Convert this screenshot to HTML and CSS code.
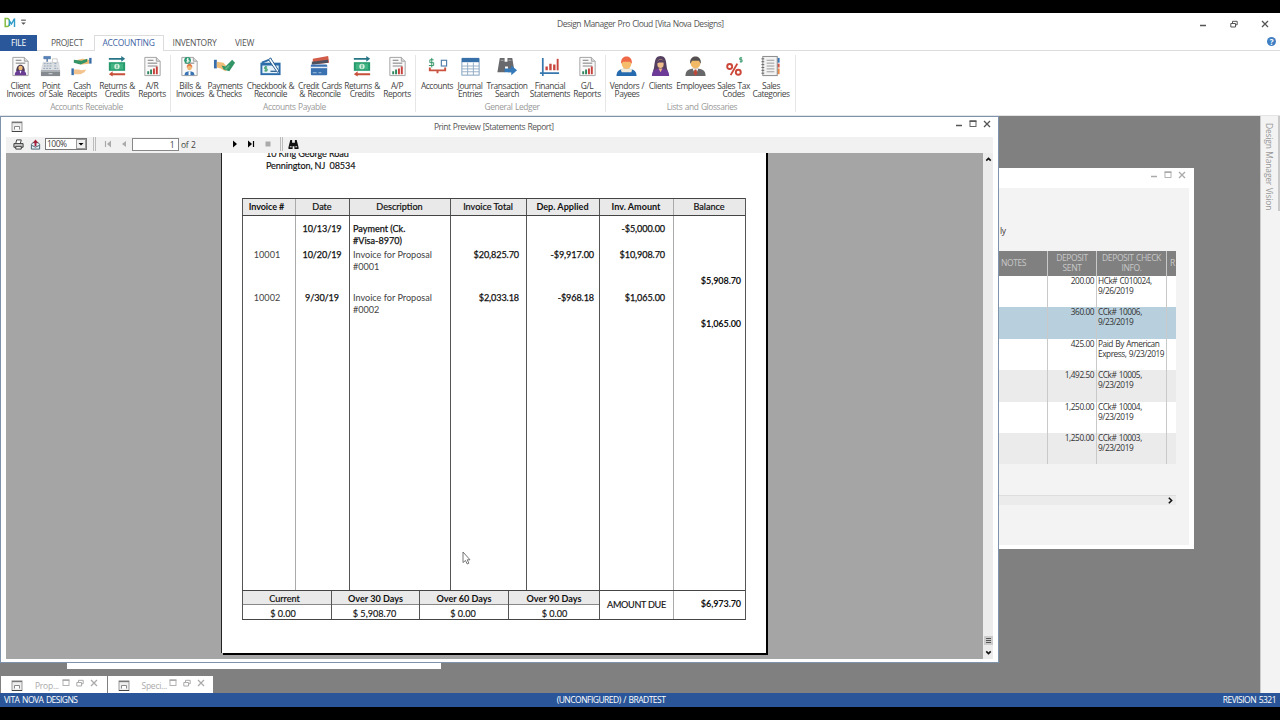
FILE: index.html
```html
<!DOCTYPE html>
<html lang="en">
<head>
<meta charset="utf-8">
<title>Design Manager Pro Cloud</title>
<link rel="stylesheet" href="styles.css">
</head>
<body>
<svg class="defs" aria-hidden="true">
  <symbol id="doc" viewBox="0 0 24 24"><path d="M4 2.500h12l4 4v15H4z" fill="#fafafa" stroke="#a2a2a2"/><path d="M16 2.500v4h4" fill="#ddd" stroke="#a2a2a2"/><path d="M7 5.500h6M7 8.500h10" stroke="#777" stroke-width="1"/></symbol>
  <symbol id="report" viewBox="0 0 24 24"><use href="#doc"/><path d="M7 11.500h10" stroke="#888"/><path d="M7.500 20v-3M10.500 20v-5" stroke="#31875f" stroke-width="2"/><path d="M13.500 20v-6M16.500 20v-8" stroke="#c8413a" stroke-width="2"/></symbol>
  <symbol id="invoice" viewBox="0 0 24 24"><use href="#doc"/><path d="M7.500 17c0-9 9-9 9 0z" fill="#4b3a50"/><circle cx="12" cy="13.500" r="2.300" fill="#f0bd78"/><path d="M6 21c0-4 3-5 6-5s6 1 6 5z" fill="#6a3c94"/><path d="M11 16.500h2l-1 3z" fill="#fff"/></symbol>
  <symbol id="register" viewBox="0 0 24 24"><path d="M5 1.500h7v2.500H5z" fill="#5584bd" stroke="#42689c" stroke-width=".6"/><path d="M8.500 4v4" stroke="#5578a5" stroke-width="1.500"/><path d="M4 7h17l1 9H2z" fill="#dde0e3"/><path d="M14 4h5v4h-5z" fill="#fff" stroke="#aaa" stroke-width=".6"/><path d="M5 9h8M5 11.500h8M4.500 14h9M16 9h3M16 11.500h3M16 14h4" stroke="#90a5ba" stroke-dasharray="2 1"/><path d="M2 16h20v6H2z" fill="#858a91"/><path d="M2 17h20" stroke="#b9bcc1"/><path d="M10 19.500h4" stroke="#ddd"/></symbol>
  <symbol id="cash" viewBox="0 0 24 24"><path d="M4 6l9-2 7 1v4l-8 1-4-1z" fill="#f0bd78"/><path d="M4 5l8 1 6-2v3l-7 3-7-2z" fill="#329467"/><path d="M20 3h2.500v6H20z" fill="#386da9"/><path d="M4 15h5l3 1 5-1-2 3-4 2H4z" fill="#f2c38e"/><path d="M1.500 14H4v7H1.500z" fill="#386da9"/></symbol>
  <symbol id="returns" viewBox="0 0 24 24"><path d="M4 3h13V1l4 3-4 3V5H4z" fill="#277587"/><rect x="4" y="7.500" width="17" height="9" fill="#249a6c"/><rect x="6" y="9" width="13" height="6" fill="#42b483"/><circle cx="12.500" cy="12" r="2.800" fill="#d7f1df"/><path d="M12.500 10v4" stroke="#249a6c"/><path d="M21 21H8v1.500L4 20l4-3v2h13z" fill="#c7503b"/></symbol>
  <symbol id="bill" viewBox="0 0 24 24"><use href="#doc"/><circle cx="10" cy="5.500" r="3.500" fill="#2b9b73"/><path d="M11.500 4.200h-2v1.500h2v1.500h-3M10 3v5" stroke="#fff" stroke-width=".8" fill="none"/><path d="M9 13c0-5 6-5 6 0z" fill="#e47743"/><circle cx="12" cy="13.500" r="2.400" fill="#efba76"/><path d="M7 20c0-4 10-4 10 0v1H7z" fill="#3975b4"/><path d="M11 17h2v4h-2z" fill="#fff"/></symbol>
  <symbol id="handshake" viewBox="0 0 24 24"><path d="M1 5h3v9H1z" fill="#386da9"/><path d="M4 7l7 1 5 6-3 3-5-3-4-1z" fill="#f0bd78"/><path d="M9 11l4 1 7-7 3 3-6 9-6-2z" fill="#329467"/><path d="M13 15l4-4" stroke="#60bb8a" stroke-width="1.500"/></symbol>
  <symbol id="checkbook" viewBox="0 0 24 24"><path d="M1.500 8h21v13h-21z" fill="#2c6da9"/><path d="M3.500 11h17v8h-17z" fill="#e7f4fb"/><path d="M3 8l10-4" stroke="#2c6da9" stroke-width="2"/><path d="M12 3l9 14-2 1L10 5z" fill="#f6fbfd" stroke="#285b8d"/><path d="M12 17h6" stroke="#285b8d" stroke-width="1.300"/><path d="M8.500 12.500H6v2h2.500v2h-3M7.200 11.500v6" stroke="#3a9c65" fill="none"/></symbol>
  <symbol id="cards" viewBox="0 0 24 24"><path d="M5 4l16-3 1 7-17 2z" fill="#d05c49"/><path d="M4 7l17-2v3L4 10z" fill="#4c5260"/><rect x="3" y="10" width="17" height="11" rx="1" fill="#3a71b0"/><path d="M3 13h17" stroke="#e8eef5" stroke-width="1.500"/><path d="M5 18.500h4M11 18.500h3" stroke="#a8c2df"/></symbol>
  <symbol id="accounts" viewBox="0 0 24 24"><path d="M4 13v3h16v-3M12 16v3" fill="none" stroke="#c9523e" stroke-width="2"/><path d="M8 5H4v3h4v3H3M6 3v10" fill="none" stroke="#329467" stroke-width="1"/><rect x="16" y="5.500" width="5.500" height="6" fill="#fff" stroke="#4e7eaa" stroke-width="1.200"/></symbol>
  <symbol id="journal" viewBox="0 0 24 24"><rect x="3" y="4" width="18" height="17" fill="#fff" stroke="#7b9fbd"/><path d="M3 3h18v4.500H3z" fill="#376fa9"/><path d="M9 8v13M15 8v13M3 11.500h18M3 14.500h18M3 17.500h18" stroke="#93aec5"/></symbol>
  <symbol id="search" viewBox="0 0 24 24"><path d="M5 3h5v4h3V3h5l2.500 15h-7v-6h-3v6h-8z" fill="#68696c"/><path d="M6 5.500h3M14 5.500h3" stroke="#aaa"/><path d="M10 14h7v-3l6 5-6 5v-3h-7z" fill="#347abb"/></symbol>
  <symbol id="chart" viewBox="0 0 24 24"><path d="M2 19h20M5 3v19" fill="none" stroke="#3778af" stroke-width="1.800"/><path d="M9 16v-4M13 16V9M17 16v-6" stroke="#c8463d" stroke-width="2.500"/><path d="M20.500 16V4" stroke="#c8463d" stroke-width="2"/></symbol>
  <symbol id="vendor" viewBox="0 0 24 24"><path d="M1.500 22c0-6 4-8 10.500-8s10.500 2 10.500 8z" fill="#276baf"/><path d="M6 15l3-1h6l3 1-1 3H7z" fill="#f1ead9"/><circle cx="12" cy="9.500" r="5" fill="#f5bd6b"/><path d="M6.500 9C5-1 19-1 17.500 9l-2-2h-7z" fill="#ef6847"/></symbol>
  <symbol id="client" viewBox="0 0 24 24"><path d="M4 17C7 13 4 1 12 1s5 12 8 16z" fill="#554061"/><ellipse cx="12" cy="9" rx="3.300" ry="4.500" fill="#eebd8b"/><path d="M8 9c1-6 7-5 8-1-3 0-5-1-8 1z" fill="#554061"/><path d="M3 22c0-6 3-8 9-8s9 2 9 8z" fill="#6e3a97"/><path d="M10 14h4l-2 4z" fill="#eebd8b"/></symbol>
  <symbol id="employee" viewBox="0 0 24 24"><path d="M1.500 22c0-6 3-8 10.500-8s10.500 2 10.500 8z" fill="#68686b"/><path d="M9 14h6l-3 7z" fill="#fff"/><path d="M11 15h2l1 4-2 3-2-3z" fill="#bb4938"/><circle cx="12" cy="9" r="5" fill="#f1b966"/><path d="M6.500 9C5-1 19-1 17.500 9l-2-3h-7z" fill="#55504f"/></symbol>
  <symbol id="tax" viewBox="0 0 24 24"><circle cx="8" cy="12" r="2.600" fill="none" stroke="#cc4739" stroke-width="2"/><circle cx="17" cy="18" r="2.600" fill="none" stroke="#cc4739" stroke-width="2"/><path d="M16 9L9 21" stroke="#cc4739" stroke-width="2"/><path d="M21 3h-2.500v2H21v2h-2.500M19.800 2v6" stroke="#329467" stroke-width=".9" fill="none"/></symbol>
  <symbol id="notebook" viewBox="0 0 24 24"><path d="M19 3h2.500v5H19z" fill="#3975b4"/><path d="M19 9h2.500v4H19z" fill="#d35344"/><path d="M19 14h2.500v6H19z" fill="#e78a47"/><rect x="4" y="1.500" width="15" height="20" fill="#f3f3f3" stroke="#888"/><path d="M8 5.500h8M8 8.500h8M8 11.500h8M8 14.500h8M8 17.500h8" stroke="#999"/><path d="M2.500 4h3M2.500 7h3M2.500 10h3M2.500 13h3M2.500 16h3M2.500 19h3" stroke="#666"/></symbol>
  <symbol id="min" viewBox="0 0 10 10"><path d="M2 6.500h6" stroke="currentColor" stroke-width="1.500"/></symbol>
  <symbol id="max" viewBox="0 0 10 10"><rect x="2" y="2" width="6" height="5.500" fill="none" stroke="currentColor" stroke-width=".9"/><path d="M1.600 2.200h6.800" stroke="currentColor" stroke-width="1.500"/></symbol>
  <symbol id="restore" viewBox="0 0 10 10"><path d="M3.500 4V2.300h4.700v3.500H6.500M1.800 4.500h4.700V8H1.800z" fill="none" stroke="currentColor"/></symbol>
  <symbol id="close" viewBox="0 0 10 10"><path d="M2 2l6 6M8 2L2 8" stroke="currentColor" stroke-width="1.300"/></symbol>
  <symbol id="form" viewBox="0 0 12 12"><rect x="1" y="1" width="10" height="9.500" fill="#eee" stroke="#999"/><path d="M1 1.500h10" stroke="#777" stroke-width="1.300"/><path d="M1 10.500h10" stroke="#444"/><path d="M3.500 8.500v-3h5v3" fill="#fff" stroke="#888"/></symbol>
  <symbol id="glasses" viewBox="0 0 12 12"><path d="M2.500 1h2v3h3V1h2l2 8v2H7V8H5v3H.5V9z" fill="#111"/><path d="M2 8.500h2M8 8.500h2" stroke="#fff"/></symbol>
</svg>

<div class="screen">
  <header class="titlebar">
    <svg class="logo" viewBox="0 0 12 11"><path d="M1.200 1.500v8h2c3 0 3-8 0-8z" fill="none" stroke="#84bd42" stroke-width="1.500"/><path d="M5.500 9V4l2 3 3-5.500V10" fill="none" stroke="#2e9bc8" stroke-width="1.400"/></svg>
    <svg class="quick" viewBox="0 0 6 6"><path d="M1 1h4" stroke="#555"/><path d="M1 3h4L3 5z" fill="#555"/></svg>
    <div class="app-title">Design Manager Pro Cloud [Vita Nova Designs]</div>
    <div class="app-buttons"><svg><use href="#min"/></svg><svg><use href="#restore"/></svg><svg><use href="#close"/></svg></div>
  </header>
  <nav class="tabs">
    <div class="tab file">FILE</div><div class="tab project">PROJECT</div><div class="tab active">ACCOUNTING</div><div class="tab inventory">INVENTORY</div><div class="tab view">VIEW</div>
    <div class="help">?</div>
  </nav>
  <section class="ribbon">
    <div class="group g-ar">
      <div class="items">
        <div class="item"><svg><use href="#invoice"/></svg>Client<br>Invoices</div>
        <div class="item"><svg><use href="#register"/></svg>Point<br>of Sale</div>
        <div class="item"><svg><use href="#cash"/></svg>Cash<br>Receipts</div>
        <div class="item"><svg><use href="#returns"/></svg>Returns &amp;<br>Credits</div>
        <div class="item"><svg><use href="#report"/></svg>A/R<br>Reports</div>
      </div><div class="caption">Accounts Receivable</div>
    </div>
    <div class="group g-ap">
      <div class="items">
        <div class="item"><svg><use href="#bill"/></svg>Bills &amp;<br>Invoices</div>
        <div class="item"><svg><use href="#handshake"/></svg>Payments<br>&amp; Checks</div>
        <div class="item"><svg><use href="#checkbook"/></svg>Checkbook &amp;<br>Reconcile</div>
        <div class="item"><svg><use href="#cards"/></svg>Credit Cards<br>&amp; Reconcile</div>
        <div class="item"><svg><use href="#returns"/></svg>Returns &amp;<br>Credits</div>
        <div class="item"><svg><use href="#report"/></svg>A/P<br>Reports</div>
      </div><div class="caption">Accounts Payable</div>
    </div>
    <div class="group g-gl">
      <div class="items">
        <div class="item"><svg><use href="#accounts"/></svg>Accounts</div>
        <div class="item"><svg><use href="#journal"/></svg>Journal<br>Entries</div>
        <div class="item"><svg><use href="#search"/></svg>Transaction<br>Search</div>
        <div class="item"><svg><use href="#chart"/></svg>Financial<br>Statements</div>
        <div class="item"><svg><use href="#report"/></svg>G/L<br>Reports</div>
      </div><div class="caption">General Ledger</div>
    </div>
    <div class="group g-lists">
      <div class="items">
        <div class="item"><svg><use href="#vendor"/></svg>Vendors /<br>Payees</div>
        <div class="item"><svg><use href="#client"/></svg>Clients</div>
        <div class="item"><svg><use href="#employee"/></svg>Employees</div>
        <div class="item"><svg><use href="#tax"/></svg>Sales Tax<br>Codes</div>
        <div class="item"><svg><use href="#notebook"/></svg>Sales<br>Categories</div>
      </div><div class="caption">Lists and Glossaries</div>
    </div>
  </section>

  <main class="workspace">
    <div class="desktop">
      <div class="window behind"></div>
      <div class="window orders">
        <div class="win-buttons faded"><svg><use href="#min"/></svg><svg><use href="#max"/></svg><svg><use href="#close"/></svg></div>
        <div class="orders-body">
          <div class="option">ly</div>
          <div class="deposits">
            <div class="drow dhead"><div>NOTES</div><div>DEPOSIT<br>SENT</div><div>DEPOSIT CHECK<br>INFO.</div><div>R</div></div>
            <div class="drow"><div></div><div>200.00</div><div>HCk# C010024,<br>9/26/2019</div><div></div></div>
            <div class="drow selected"><div></div><div>360.00</div><div>CCk# 10006,<br>9/23/2019</div><div></div></div>
            <div class="drow"><div></div><div>425.00</div><div>Paid By American<br>Express, 9/23/2019</div><div></div></div>
            <div class="drow alt"><div></div><div>1,492.50</div><div>CCk# 10005,<br>9/23/2019</div><div></div></div>
            <div class="drow"><div></div><div>1,250.00</div><div>CCk# 10004,<br>9/23/2019</div><div></div></div>
            <div class="drow alt"><div></div><div>1,250.00</div><div>CCk# 10003,<br>9/23/2019</div><div></div></div>
          </div>
          <div class="hscroll"><svg viewBox="0 0 8 8"><path d="M2.500 1.500L5 4 2.500 6.500" fill="none" stroke="#111" stroke-width="1.400"/></svg></div>
        </div>
      </div>

      <div class="window preview">
        <div class="preview-title">
          <svg class="form-icon"><use href="#form"/></svg>
          <div class="preview-name">Print Preview [Statements Report]</div>
          <div class="win-buttons"><svg><use href="#min"/></svg><svg><use href="#max"/></svg><svg><use href="#close"/></svg></div>
        </div>
        <div class="toolbar">
          <svg class="t-print" viewBox="0 0 12 12"><path d="M3 5l1-4h5L8 5" fill="#fff" stroke="#333"/><path d="M1 5h10v4H1z" fill="#ccc" stroke="#333"/><path d="M3 8h6v3H3z" fill="#eee" stroke="#333"/></svg>
          <svg class="t-export" viewBox="0 0 12 12"><path d="M1.500 6v5h9V6L9 4H3z" fill="#e8f1f6" stroke="#3c5969"/><path d="M2 7l4 2 4-2" fill="none" stroke="#3c5969"/><path d="M5 8V4H3l3-3.500L9 4H7v4z" fill="#a51f37"/></svg>
          <div class="zoom-box"><span>100%</span><i><svg viewBox="0 0 8 8"><path d="M1.500 3h5L4 5.500z"/></svg></i></div>
          <div class="grip"></div>
          <svg class="t-first off" viewBox="0 0 8 8"><path d="M1.500 1v6" stroke="currentColor" stroke-width="1.200"/><path d="M7 .5v7L3 4z" fill="currentColor"/></svg>
          <svg class="t-prev off" viewBox="0 0 8 8"><path d="M6 1v6L2 4z" fill="currentColor"/></svg>
          <div class="page-box">1</div>
          <div class="of">of 2</div>
          <svg class="t-next" viewBox="0 0 8 8"><path d="M2 .5v7L6 4z"/></svg>
          <svg class="t-last" viewBox="0 0 8 8"><path d="M1 .5v7L5 4z"/><path d="M6.500 1v6" stroke="#000" stroke-width="1.200"/></svg>
          <svg class="t-stop off" viewBox="0 0 8 8"><path d="M1.500 1.500h5v5h-5z" fill="currentColor"/></svg>
          <div class="grip second"></div>
          <svg class="t-find"><use href="#glasses"/></svg>
        </div>
        <div class="view-area">
          <div class="canvas">
            <div class="paper">
              <div class="address"><span>10 King George Road</span><br>Pennington, NJ&nbsp; 08534</div>
              <div class="statement">
                <div class="row head"><div class="b">Invoice #</div><div>Date</div><div>Description</div><div>Invoice Total</div><div class="b">Dep. Applied</div><div class="b">Inv. Amount</div><div>Balance</div></div>
                <div class="row spacer"><div></div><div></div><div></div><div></div><div></div><div></div><div></div></div>
                <div class="row line"><div></div><div>10/13/19</div><div>Payment (Ck.<br>#Visa-8970)</div><div></div><div></div><div>-$5,000.00</div><div></div></div>
                <div class="row line"><div class="l">10001</div><div>10/20/19</div><div class="l">Invoice for Proposal<br>#0001</div><div>$20,825.70</div><div>-$9,917.00</div><div>$10,908.70</div><div></div></div>
                <div class="row bal"><div></div><div></div><div></div><div></div><div></div><div></div><div>$5,908.70</div></div>
                <div class="row line"><div class="l">10002</div><div>9/30/19</div><div class="l">Invoice for Proposal<br>#0002</div><div>$2,033.18</div><div>-$968.18</div><div>$1,065.00</div><div></div></div>
                <div class="row bal"><div></div><div></div><div></div><div></div><div></div><div></div><div>$1,065.00</div></div>
                <div class="row rest"><div></div><div></div><div></div><div></div><div></div><div></div><div></div></div>
                <div class="aging">
                  <div class="age first"><b class="m">Current</b><span>$ 0.00</span></div>
                  <div class="age"><b>Over 30 Days</b><span>$ 5,908.70</span></div>
                  <div class="age"><b>Over 60 Days</b><span>$ 0.00</span></div>
                  <div class="age last"><b>Over 90 Days</b><span>$ 0.00</span></div>
                  <div class="due">AMOUNT DUE</div><div class="total">$6,973.70</div>
                </div>
              </div>
            </div>
          </div>
          <div class="vscroll">
            <svg viewBox="0 0 8 8"><path d="M2 5l2-2 2 2" fill="none" stroke="#111" stroke-width="1.400"/></svg>
            <div class="thumb"><i></i><i></i><i></i></div>
            <svg viewBox="0 0 8 8"><path d="M2 3l2 2 2-2" fill="none" stroke="#111" stroke-width="1.400"/></svg>
          </div>
        </div>
      </div>
      <svg class="cursor" viewBox="0 0 9 14"><path d="M1 1v10.500l2.500-2 1.700 3.500 1.700-.8-1.700-3.400H8z" fill="#fff" stroke="#666" stroke-width=".9"/></svg>
      <div class="minimized">
        <div class="mini"><svg class="form-icon"><use href="#form"/></svg><span>Prop...</span><div class="mini-buttons"><svg><use href="#max"/></svg><svg><use href="#restore"/></svg><svg><use href="#close"/></svg></div></div>
        <div class="mini"><svg class="form-icon"><use href="#form"/></svg><span>Speci...</span><div class="mini-buttons"><svg><use href="#max"/></svg><svg><use href="#restore"/></svg><svg><use href="#close"/></svg></div></div>
      </div>
    </div>
    <aside class="side"><div>Design Manager Vision</div><i></i></aside>
  </main>
  <footer class="status"><span>VITA NOVA DESIGNS</span><span>(UNCONFIGURED) / BRADTEST</span><span>REVISION 5321</span></footer>
</div>
</body>
</html>
```
FILE: styles.css
```css
* { box-sizing: border-box; }
body { margin: 0; background: #000; font-family: "Open Sans", "Noto Sans", sans-serif; font-size: 8.500px; letter-spacing: -.5px; word-spacing: .6px; color: #444; overflow: hidden; }
svg { display: block; }
.defs { display: none; }
.screen { width: 1280px; height: 720px; padding: 13px 0; display: flex; flex-direction: column; background: #000; }

.titlebar { height: 22px; background: #fff; display: flex; flex: none; padding-left: 4px; }
.logo { width: 12px; height: 11px; margin-top: 4px; }
.quick { width: 7px; height: 7px; margin: 6px 0 0 4px; }
.app-title { flex: none; width: 1171px; padding-left: 530px; line-height: 21px; color: #555; letter-spacing: -.48px; }
.app-buttons { display: flex; gap: 21px; padding-top: 6px; color: #555; }
.app-buttons svg { width: 10px; height: 10px; }

.tabs { height: 16px; background: #fff; display: flex; flex: none; border-bottom: 1px solid #dcdcdc; line-height: 16px; font-size: 8.500px; letter-spacing: -.27px; color: #555; }
.tab { text-align: center; height: 16px; }
.file { width: 37px; background: #2a579a; color: #fff; }
.project { width: 60px; }
.active { width: 70px; margin-left: -3px; padding-right: 1px; background: #fff; border: 1px solid #dcdcdc; border-bottom: 0; line-height: 14px; color: #3d64a4; }
.inventory { width: 61px; }
.view { width: 39px; }
.help { margin: 2px 4px 0 auto; width: 9px; height: 9px; border-radius: 5px; background: #3f7fc4; color: #fff; font-size: 8px; font-weight: 700; line-height: 9px; text-align: center; }

.ribbon { height: 65px; flex: none; background: #fff; display: flex; border-bottom: 1px solid #e2e4e6; }
.group { border-right: 1px solid #e6e6e6; margin: 4px 0 3px; }
.items { display: grid; height: 47px; }
.g-ar { width: 171px; }
.g-ap { width: 245px; }
.g-gl { width: 190px; }
.g-lists { width: 190px; }
.g-ar .items { padding-left: 5px; grid-template-columns: 31px 30px 32px 38px 32px; }
.g-ap .items { padding-left: 2px; grid-template-columns: 34px 36px 55px 44px 40px 30px; }
.g-gl .items { padding-left: 3px; grid-template-columns: 36px 30px 44px 42px 32px; }
.g-lists .items { padding-left: 3px; grid-template-columns: 36px 31px 39px 37px 38px; }
.item { text-align: center; font-size: 8.400px; letter-spacing: -.42px; line-height: 8.700px; white-space: nowrap; justify-self: center; }
.item svg { width: 23px; height: 23px; margin: 0 auto 3.500px; }
.caption { text-align: center; line-height: 9px; font-size: 8.400px; letter-spacing: -.38px; color: #999; padding-left: 3px; }

.workspace { flex: 1; display: flex; background: #808080; min-height: 0; }
.desktop { position: relative; width: 1260px; overflow: hidden; }
.side { width: 20px; background: #f3f3f3; border-left: 1px solid #ccc; display: flex; justify-content: space-between; }
.side div { writing-mode: vertical-rl; padding: 7px 0 0 2px; letter-spacing: -.2px; color: #999; font-size: 8.500px; line-height: 13px; }
.side i { width: 2px; height: 95px; background: #c9c9c9; }

.window { position: absolute; background: #fff; }
.behind { left: 67px; top: 500px; width: 374px; height: 53px; }
.orders { left: 900px; top: 52px; width: 294px; height: 381px; padding: 0 5px 4px 0; display: flex; flex-direction: column; }
.win-buttons { display: flex; gap: 4px; justify-content: flex-end; color: #555; }
.win-buttons svg { width: 10px; height: 10px; }
.win-buttons.faded { height: 20px; flex: none; padding: 2px 2px 0 0; color: #aaa; }
.orders-body { flex: 1; background: #f3f3f3; padding-left: 98px; display: flex; flex-direction: column; }
.option { margin: 38px 0 0 2px; height: 25px; line-height: 10px; color: #433; }
.deposits { width: 178px; letter-spacing: -.45px; color: #333; font-size: 8.300px; }
.drow { display: grid; grid-template-columns: 49px 49px 70px 10px; height: 31.400px; line-height: 10px; background: #fff; white-space: nowrap; overflow: hidden; }
.drow div + div { border-left: 1px solid #c9c9c9; }
.drow div:nth-child(2) { text-align: right; padding-right: 2px; }
.drow div:nth-child(3) { padding-left: 1px; }
.drow.selected { background: #b8d0dd; }
.drow.alt { background: #ebebeb; }
.drow.dhead { height: 25px; background: #808080; color: #c8c8c8; font-size: 8.500px; letter-spacing: -.4px; }
.drow.dhead div { padding: 2px 0 0; text-align: center; }
.drow.dhead div:first-child, .drow.dhead div:last-child { padding: 7px 0 0 3px; text-align: left; }
.hscroll { width: 178px; height: 10px; margin-top: 31px; background: #ebebeb; border-top: 1px solid #ddd; display: flex; justify-content: flex-end; }
.hscroll svg { width: 9px; height: 9px; margin-right: 1px; }

.preview { left: 0; top: 0; width: 999px; height: 547px; border: 1px solid #7f93ad; display: flex; flex-direction: column; padding: 0 5px 3px 5px; }
.preview-title { height: 20px; flex: none; display: flex; line-height: 20px; }
.form-icon { width: 12px; height: 12px; flex: none; }
.preview-title .form-icon { margin: 4px 0 0 5px; }
.preview-name { margin-left: 411px; width: 490px; color: #555; }
.preview-title .win-buttons { padding-top: 2px; margin-left: auto; margin-right: 1px; }
.toolbar { height: 16px; flex: none; background: #f1f1f1; display: flex; align-items: center; padding: 0 0 2px 6px; }
.toolbar svg { flex: none; width: 8px; height: 8px; }
.toolbar .off { color: #aaa; }
.toolbar .t-print { width: 11px; height: 11px; margin-left: 1px; }
.toolbar .t-export { width: 11px; height: 11px; margin-left: 6px; }
.zoom-box { width: 42px; height: 12px; margin-left: 4px; background: #fff; border: 1px solid #777; display: flex; justify-content: space-between; line-height: 10px; padding-left: 1px; }
.zoom-box i { width: 10px; background: #eee; border: 1px solid #999; }
.grip { width: 3px; height: 14px; border-left: 1px solid #bbb; border-right: 1px solid #bbb; margin-left: 6px; }
.t-first { margin-left: 8px; }
.t-prev { margin-left: 8px; }
.page-box { width: 47px; height: 13px; margin-left: 4px; background: #fff; border: 1px solid #888; line-height: 11px; text-align: right; padding-right: 4px; }
.of { margin-left: 2px; width: 50px; letter-spacing: -.3px; }
.t-last { margin-left: 8px; }
.t-stop { margin-left: 9px; }
.grip.second { margin-left: 8px; }
.toolbar .t-find { width: 11px; height: 11px; margin-left: 5px; }
.view-area { flex: 1; display: flex; min-height: 0; }
.canvas { width: 977px; background: #a5a5a5; padding-left: 215px; overflow: hidden; }
.paper { width: 545px; height: 500px; background: #fff; border-left: 1px solid #222; box-shadow: 2px 2px 0 #000, 2px 0 0 #000; display: flex; flex-direction: column; font-family: Lato, sans-serif; color: #111; font-size: 9.100px; letter-spacing: 0; word-spacing: 0; }
.address { height: 45px; margin: -5px 0 0 44px; line-height: 12px; flex: none; letter-spacing: -.12px; -webkit-text-stroke: .15px #111; }
.statement { width: 504px; height: 422px; margin: 5px 0 0 20px; display: flex; flex-direction: column; border-right: 1px solid #555; border-bottom: 1px solid #444; line-height: 12px; }
.row { display: grid; grid-template-columns: 53px 54px 101px 76px 73px 74px 1fr; }
.row > div { border-left: 1px solid #555; }
.row > div:nth-child(2), .row > div:nth-child(7) { border-left-color: #aaa; }
.head { height: 18px; flex: none; background: #e9e9e9; border-top: 1px solid #444; border-bottom: 1px solid #444; text-align: center; line-height: 16px; }
.head > div { padding-right: 1px; -webkit-text-stroke: .2px #111; }
.head .b { font-weight: 700; -webkit-text-stroke: 0; }
.head > div:first-child { padding-right: 5px; letter-spacing: -.1px; }
.spacer { height: 7px; flex: none; }
.line { height: 26px; flex: none; -webkit-text-stroke: .25px #111; }
.line > div { text-align: right; padding-right: 7px; white-space: nowrap; letter-spacing: -.1px; }
.line .l { -webkit-text-stroke: 0; color: #444; letter-spacing: 0; }
.line > div:nth-child(-n+2) { text-align: center; padding: 0; }
.line > div:nth-child(1) { padding-right: 4px; }
.line > div:nth-child(2) { padding-right: 1px; }
.line > div:nth-child(3) { text-align: left; padding: 0 0 0 3px; letter-spacing: 0; }
.line > div:nth-child(5) { padding-right: 5px; }
.line > div:nth-child(6) { padding-right: 8px; }
.bal { height: 17px; flex: none; font-weight: 700; text-align: right; letter-spacing: -.12px; }
.bal > div { padding: 0 4px 0 0; }
.rest { flex: 1; }
.aging { display: grid; grid-template-columns: 89px 88px 89px 91px 74px 1fr; grid-template-rows: 28px; height: 29px; flex: none; border-top: 1px solid #444; }
.aging > div { border-left: 1px solid #555; text-align: center; overflow: hidden; }
.age b, .age span { display: block; line-height: 15px; }
.age b { height: 14px; background: #e9e9e9; border-bottom: 1px solid #888; }
.age .m { font-weight: 400; -webkit-text-stroke: .2px #111; padding-right: 5px; }
.age span { height: 14px; padding-right: 2px; line-height: 17px; -webkit-text-stroke: .15px #111; }
.age.first span { padding-right: 8px; }
.age.last span { padding: 0 0 0 1px; }
.due { line-height: 27px; letter-spacing: -.3px; -webkit-text-stroke: .15px #111; }
.aging .total { font-weight: 700; line-height: 26px; text-align: right; padding-right: 4px; border-left-color: #aaa; letter-spacing: -.12px; }
.vscroll { width: 10px; background: #ececec; display: flex; flex-direction: column; align-items: center; padding: 2px 0; }
.vscroll svg { width: 9px; height: 9px; }
.thumb { margin: auto 0 3px; width: 9px; height: 9px; background: #ccc; padding: 2px; display: flex; flex-direction: column; gap: 1px; }
.thumb i { height: 1px; background: #555; }
.cursor { position: absolute; left: 462px; top: 435px; width: 9px; height: 14px; }

.minimized { position: absolute; left: 1px; bottom: 0; display: flex; gap: 1px; }
.mini { width: 105.500px; height: 17px; background: #fff; display: flex; padding: 4px 0 0 10px; color: #aaa; }
.mini span { margin: 1px 0 0 12px; width: 26px; line-height: 10px; letter-spacing: -.25px; }
.mini-buttons { display: flex; gap: 4px; margin-top: -2px; }
.mini-buttons svg { width: 10px; height: 10px; }
.status { height: 14px; flex: none; background: #2a5699; color: #fff; display: grid; grid-template-columns: 1fr 1fr 1fr; line-height: 14px; padding: 0 4px; letter-spacing: -.52px; word-spacing: .9px; }
.status span:nth-child(2) { text-align: center; padding-right: 58px; }
.status span:nth-child(3) { text-align: right; }
```
